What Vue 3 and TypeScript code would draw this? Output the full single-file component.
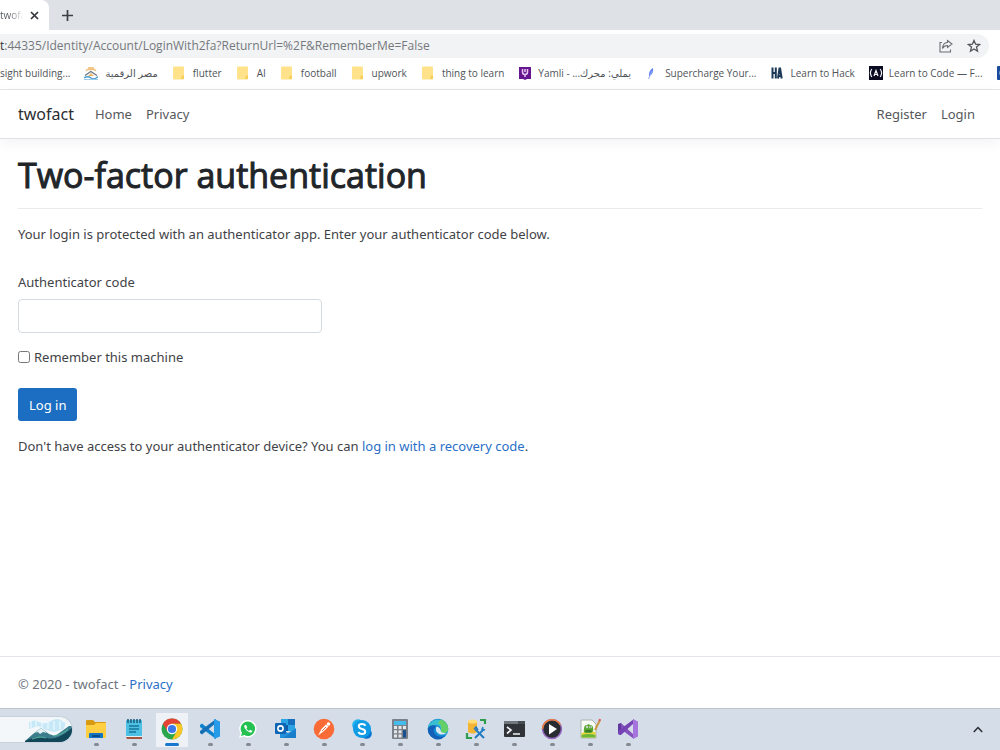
<script setup lang="ts">
import { ref } from 'vue'

interface Bookmark {
  label: string
  icon: string
  rtl?: boolean
  tight?: boolean
}

const bookmarks: Bookmark[] = [
  { label: 'sight building...', icon: 'none' },
  { label: 'مصر الرقمية', icon: 'egypt', rtl: true },
  { label: 'flutter', icon: 'folder' },
  { label: 'AI', icon: 'folder' },
  { label: 'football', icon: 'folder' },
  { label: 'upwork', icon: 'folder' },
  { label: 'thing to learn', icon: 'folder' },
  { label: 'Yamli - ...يملي: محرك', icon: 'yamli', tight: true },
  { label: 'Supercharge Your...', icon: 'feather', tight: true },
  { label: 'Learn to Hack', icon: 'hack', tight: true },
  { label: 'Learn to Code — F...', icon: 'code', tight: true },
  { label: '', icon: 'badge' },
]

const apps: string[] = [
  'File Explorer', 'Notepad', 'Chrome', 'Visual Studio Code', 'WhatsApp', 'Outlook', 'Postman', 'Skype',
  'Calculator', 'Edge', 'Database Tools', 'Terminal', 'Media Player', 'Notepad++', 'Visual Studio',
]

const code = ref('')
const remember = ref(false)
</script>

<template>
  <div class="screen">
    <header class="browser">
      <div class="tabs">
        <div class="tab">
          <span class="tab-title">twofa</span>
          <button class="plain tab-close" aria-label="Close tab">
            <svg width="9" height="9" viewBox="0 0 9 9"><path d="M1 1l7 7M8 1L1 8" stroke="#33363a" stroke-width="1.7" /></svg>
          </button>
        </div>
        <button class="plain tab-new" aria-label="New tab">
          <svg width="11" height="11" viewBox="0 0 11 11"><path d="M5.500 0v11M0 5.500h11" stroke="#3c4043" stroke-width="1.7" /></svg>
        </button>
      </div>
      <div class="address-row">
        <div class="address">
          <span class="url"><b>t</b>:44335/Identity/Account/LoginWith2fa?ReturnUrl=%2F&amp;RememberMe=False</span>
          <button class="plain" aria-label="Share">
            <svg width="14" height="14" viewBox="0 0 14 14" fill="none" stroke="#6b6f73" stroke-width="1.100"><path d="M3 3.500H1V13H11.500V10.500M8.500 1.500L13 5 8.500 8.500V6.500C6 6.500 4.500 7.500 3.500 9.500 3.500 6 5.500 3.800 8.500 3.500Z" /></svg>
          </button>
          <button class="plain" aria-label="Bookmark this page">
            <svg width="14" height="14" viewBox="0 0 14 14" fill="none" stroke="#505357" stroke-width="1.300"><path d="M7 1.500L8.600 5.200 12.600 5.500 9.500 8.100 10.500 12.200 7 10 3.500 12.200 4.500 8.100 1.400 5.500 5.400 5.200Z" /></svg>
          </button>
        </div>
      </div>
      <nav class="bookmarks" aria-label="Bookmarks">
        <a v-for="b in bookmarks" :key="b.label" href="#" class="bookmark" :class="{ tight: b.tight }">
          <svg v-if="b.icon === 'folder'" class="bm-icon" viewBox="0 0 14 14"><rect x="1" y="0.500" width="11" height="13" rx="1" fill="#ffe289" /><path d="M10 9.500h2v3.500h-3z" fill="#f7ce58" /></svg>
          <svg v-else-if="b.icon === 'egypt'" class="bm-icon" viewBox="0 0 14 14"><path d="M4 2h6" stroke="#efb768" stroke-width="1.500" /><path d="M2 5L3.500 3.500h7L12 5" stroke="#f1c27f" stroke-width="1.500" fill="none" /><path d="M1 9.500L6.800 5.500 13 9.500" stroke="#6b7580" stroke-width="1.300" fill="none" /><path d="M4 10l3-3 3 3z" fill="#e9b66f" /><path d="M0 12q3.500-2.500 7 0t7-1.500" stroke="#4d9ed1" stroke-width="1.500" fill="none" /><path d="M0 13.500h14" stroke="#9dcceb" /></svg>
          <svg v-else-if="b.icon === 'yamli'" class="bm-icon" viewBox="0 0 14 14"><path d="M1 1h12v12H9l-2 1-2-1H1z" fill="#65158d" /><path d="M4.500 3v3q0 2.500 2.500 2.500T9.500 6V3M7 3v3M7 8v3" stroke="#e9c9f3" stroke-width="1.500" fill="none" /></svg>
          <svg v-else-if="b.icon === 'feather'" class="bm-icon" viewBox="0 0 14 14"><path d="M4 10Q3.500 4.500 8 2q1 5-3.500 8z" fill="#5c7ef0" /><path d="M3.500 13L7 5" stroke="#95aaf7" /></svg>
          <svg v-else-if="b.icon === 'hack'" class="bm-icon" viewBox="0 0 14 14"><path d="M2.500 1.500v11M5.800 1.500v11M2.500 7h3.500M8 12.500L9.500 2.500h.6L11.700 12.500M9 10h2" stroke="#1b3a57" stroke-width="2" fill="none" /></svg>
          <svg v-else-if="b.icon === 'code'" class="bm-icon" viewBox="0 0 14 14"><path d="M0 0h14v14H0z" fill="#0a0a23" /><path d="M2.800 3Q0 7 2.800 11M11.200 3q2.800 4 0 8M5 10L7 4.500 9 10M6 8.500h2" stroke="#f4f4f7" stroke-width="1.200" fill="none" /></svg>
          <svg v-else-if="b.icon === 'badge'" class="bm-icon" viewBox="0 0 14 14"><rect width="14" height="14" rx="1" fill="#1b4b9c" /><circle cx="7" cy="7" r="4" fill="none" stroke="#9cbbe8" stroke-width="1.500" /></svg>
          <bdi :dir="b.rtl ? 'rtl' : 'ltr'">{{ b.label }}</bdi>
        </a>
      </nav>
    </header>

    <nav class="site-nav">
      <a href="#" class="brand">twofact</a>
      <a href="#">Home</a>
      <a href="#">Privacy</a>
      <a href="#" class="push">Register</a>
      <a href="#">Login</a>
    </nav>

    <main>
      <h1>Two-factor authentication</h1>
      <hr />
      <p class="intro">Your login is protected with an authenticator app. Enter your authenticator code below.</p>
      <form @submit.prevent>
        <label for="code">Authenticator code</label>
        <input id="code" v-model="code" class="code" type="text" autocomplete="off" />
        <div class="check">
          <input id="remember" v-model="remember" type="checkbox" />
          <label for="remember">Remember this machine</label>
        </div>
        <button class="submit" type="submit">Log in</button>
      </form>
      <p class="help">Don't have access to your authenticator device? You can <a href="#">log in with a recovery code</a>.</p>
    </main>

    <footer>© 2020 - twofact - <a href="#">Privacy</a></footer>

    <div class="taskbar">
      <button class="plain search" aria-label="Search">
        <svg width="48" height="26" viewBox="0 0 48 26">
          <path d="M5 6Q10 3 15 6T27 5 38 5 42 4L40 13 30 16 22 14 14 10 5 13Z" fill="#c6e8f7" />
          <path d="M7 5v7M12 4v6M18 5v7M24 4v9M30 5v9M36 5v8" stroke="#e6f6fc" stroke-width="1.500" />
          <path d="M1 25L9 18 17 12 25 18 31 20 45 10H48V26H1Z" fill="#3b7d8c" />
          <path d="M11 17l6-5 6 5-4-1-3 2-2-2z" fill="#e5f2f5" />
          <path d="M1 25q12-6 22-3T48 12v14H1z" fill="#12475a" />
          <path d="M8 23q8-3 14-1M30 20q8-1 14-7" stroke="#4fa596" stroke-width="1.300" fill="none" />
        </svg>
      </button>
      <button v-for="app in apps" :key="app" class="plain app" :class="{ active: app === 'Chrome' }" :aria-label="app">
        <svg width="22" height="22" viewBox="0 0 22 22" fill="none">
          <g v-if="app === 'File Explorer'">
            <path d="M1 3q0-1 1-1h6l2 2h10q1 0 1 1v5H1z" fill="#d99a13" />
            <path d="M1 7h8l2-2h10v15H1z" fill="#ffcf43" />
            <path d="M4 20v-4q0-1 1-1h12q1 0 1 1v4z" fill="#1474c4" /><path d="M7 18h8" stroke="#0b4d8c" stroke-width="2" />
          </g>
          <g v-else-if="app === 'Notepad'">
            <rect x="3" y="2" width="16" height="17" rx="1" fill="#4dc0e3" /><path d="M3 19h16v2H4z" fill="#a3563e" /><path d="M3 18.500h16" stroke="#e5eef2" />
            <path d="M5 1v4M8 1v4M11 1v4M14 1v4M17 1v4" stroke="#17597a" stroke-width="1.500" /><path d="M6 8h10M6 11h10M6 14h7" stroke="#167599" stroke-width="1.500" />
          </g>
          <g v-else-if="app === 'Chrome'">
            <circle cx="11" cy="11" r="10.500" fill="#29a64c" />
            <path d="M11 11L1.900 5.800A10.500 10.500 0 0 1 20.100 5.800H11z" fill="#e54335" />
            <path d="M11 5.800h9.100A10.500 10.500 0 0 1 11 21.500L15.600 13.500z" fill="#fdc827" />
            <path d="M1.900 5.800L6.500 13.600 11 11 11 5.800z" fill="#e54335" />
            <circle cx="11" cy="11" r="5.200" fill="#fff" /><circle cx="11" cy="11" r="4.100" fill="#3b79ea" />
          </g>
          <g v-else-if="app === 'Visual Studio Code'">
            <path d="M1 7l2-1.500L17 17v4L1 9z" fill="#1183ce" /><path d="M1 15l2 1.500L17 5V1L1 13z" fill="#1670b5" /><path d="M15 1l6 2.500v15L15 21z" fill="#269be8" />
          </g>
          <g v-else-if="app === 'WhatsApp'">
            <path d="M11 2a8.700 8.700 0 1 1-4.200 16.400L2 20l1.600-4.700A8.700 8.700 0 0 1 11 2z" fill="#fff" />
            <path d="M11 3.500a7.200 7.200 0 1 1-3.800 13.400L4 18l1-3.200A7.200 7.200 0 0 1 11 3.500z" fill="#25c252" />
            <path d="M8 7q-1.500 1 0 3.500T13 14.500q2 .4 2.500-1.600l-2.400-1.200-1 1.200q-1.700-.6-2.700-2.500l.8-1L9.200 7z" fill="#fff" />
          </g>
          <g v-else-if="app === 'Outlook'">
            <rect x="6" y="1" width="14" height="12" fill="#2aa4e4" /><path d="M13 1h7v6h-7z" fill="#1670bf" /><path d="M6 7h7v6H6z" fill="#105ba5" />
            <path d="M5 10l8 5 8-5v10H5z" fill="#2292dc" /><path d="M8 20l13-9v9z" fill="#1a7fcb" />
            <rect x="0" y="5" width="11" height="11" rx="1" fill="#0f65b5" /><circle cx="5.500" cy="10.500" r="2.600" stroke="#fff" stroke-width="1.600" />
          </g>
          <g v-else-if="app === 'Postman'">
            <circle cx="11" cy="11" r="10.300" fill="#fb6b36" /><path d="M5 17.500L8.500 11 13 6.500 15.500 8.500 11 13z" fill="#fff" /><circle cx="15.500" cy="6" r="1.800" fill="#fff" /><path d="M9 13l4-4" stroke="#d85025" stroke-width=".8" />
          </g>
          <g v-else-if="app === 'Skype'">
            <circle cx="7" cy="7" r="5.800" fill="#20b3ef" /><circle cx="15.500" cy="15.500" r="5.300" fill="#0875d1" /><circle cx="11" cy="11" r="9" fill="#109be5" />
            <path d="M14.500 7.800Q13.500 6 11 6 7.800 6 7.800 8.300q0 2 3.200 2.700t3.200 2.700Q14.200 16 11 16q-2.700 0-3.700-2" stroke="#fff" stroke-width="2" />
          </g>
          <g v-else-if="app === 'Calculator'">
            <rect x="3" y="1" width="16" height="20" rx="1" fill="#7b8188" /><path d="M5 3h12v4H5z" fill="#43bced" />
            <path d="M5 8h3v3H5zM9.500 8h3v3h-3zM14 8h3v3h-3zM5 12.200h3v3H5zM9.500 12.200h3v3h-3zM5 16.500h3v3H5zM9.500 16.500h3v3h-3z" fill="#e5e7e9" /><path d="M14 12.200h3v7.300h-3z" fill="#174f91" />
          </g>
          <g v-else-if="app === 'Edge'">
            <circle cx="11" cy="11" r="10.300" fill="#128cd2" />
            <path d="M1 9A10.300 10.300 0 0 1 21.200 12Q20 16 15 15q-3-.5-1.500-3Q14 7 8.500 7 3 7 1 9z" fill="#39bfd0" />
            <path d="M14 1.200Q21 4 21.300 11q-.5 4.500-5.300 4-3-.6-2-3 1-5-3-7z" fill="#64cf69" />
            <path d="M1 10Q5 6 9 8q-4 4-1 8 3 4 10 2-6 6-12 2T1 10z" fill="#1260b8" />
            <path d="M13.500 12q-.5-3-4-3.500-2 5 2.500 7.500 4 1.500 7.500-.8-6 0-6-3.200z" fill="#dbe8f2" />
          </g>
          <g v-else-if="app === 'Database Tools'">
            <path d="M3 3v11q5 3 9 0V3z" fill="#f4b535" /><ellipse cx="7.500" cy="3.500" rx="4.500" ry="2" fill="#ffdd77" />
            <path d="M15 2h5v4M2 15v5h5" stroke="#2f9d4d" stroke-width="2.200" /><path d="M10 11l9 9M19 11l-9 9" stroke="#237bc2" stroke-width="2" /><path d="M9 11l2-2 2 3M20 12l-3-1 1-2" stroke="#237bc2" stroke-width="1.500" />
          </g>
          <g v-else-if="app === 'Terminal'">
            <rect x="1" y="3" width="21" height="16" rx="1" fill="#303438" /><path d="M1 3h14v3H1z" fill="#72777c" /><path d="M15 3h7v3h-7z" fill="#484d52" /><path d="M4 9l4 3-4 3.500M10 16h7" stroke="#f1f3f4" stroke-width="1.700" />
          </g>
          <g v-else-if="app === 'Media Player'">
            <circle cx="11" cy="11" r="9.500" fill="#282b31" stroke="#9a6bc4" stroke-width="1.500" /><path d="M1.500 11A9.500 9.500 0 0 1 19.500 7" stroke="#ee803c" stroke-width="1.500" /><path d="M8 6l8 5-8 5.500z" fill="#fff" />
          </g>
          <g v-else-if="app === 'Notepad++'">
            <path d="M2 2h11l4 4v14H2z" fill="#f8faf5" stroke="#a9b2ac" /><path d="M2.500 15q6-3 14-1v5.500h-14z" fill="#e6d63c" /><path d="M2.500 17q7-2 14 0v2.500h-14z" fill="#6cb63a" />
            <path d="M5 11q0-4 3-4 1.500-1.500 3 0 3 0 3 3 1 4-2 5H6.500Q4 14 5 11z" fill="#55a52f" /><circle cx="8" cy="9" r="1.200" fill="#fff" /><circle cx="11.500" cy="9" r="1.200" fill="#fff" /><path d="M6.500 13h6M7.500 9h1M11 9h1" stroke="#224c25" />
            <path d="M16 12L21 2" stroke="#c99741" stroke-width="2" /><path d="M20.400 3L21 1" stroke="#e2595e" stroke-width="2" />
          </g>
          <g v-else>
            <path d="M1 7l3-2L17 17v4L1 9z" fill="#8452bb" /><path d="M1 6v10l3 1V5z" fill="#62369f" /><path d="M1 16l3 1L17 5V1L1 13z" fill="#7543b4" /><path d="M16 1l5 2.500v15L16 21z" fill="#a575dd" />
          </g>
        </svg>
        <span class="running"></span>
      </button>
      <button class="plain tray" aria-label="Show hidden icons">
        <svg width="10" height="7" viewBox="0 0 10 7"><path d="M.8 6L5 1.500 9.200 6" fill="none" stroke="#26292d" stroke-width="1.400" /></svg>
      </button>
    </div>
  </div>
</template>

<style>
body { margin: 0; }
</style>

<style scoped>
.screen {
  min-height: 100vh;
  display: flex;
  flex-direction: column;
  overflow: hidden;
  background: #fff;
  color: #3f4347;
  font-family: "Noto Sans", "Open Sans", "DejaVu Sans", sans-serif;
  font-size: 13px;
  line-height: 20px;
}
*, *::before, *::after { box-sizing: border-box; }
a { color: #2a70c8; text-decoration: none; }
svg { display: block; flex: none; }
button, input { font: inherit; }
.plain { display: flex; align-items: center; justify-content: center; border: 0; padding: 0; background: none; }

.browser { border-bottom: 1px solid #e4e6e8; font-family: "Open Sans", "Noto Sans", "DejaVu Sans", sans-serif; }
.tabs { display: flex; height: 30px; background: #dee1e6; }
.tab { display: flex; align-items: center; width: 49px; background: #fff; border-radius: 0 8px 0 0; }
.tab-title {
  width: 30px;
  overflow: hidden;
  font-size: 10px;
  background: linear-gradient(90deg, #55595e 30%, transparent 80%);
  background-clip: text;
  color: transparent;
}
.tab-new { margin-left: 13px; }
.address-row { padding: 4px 11px 4px 0; }
.address {
  display: flex;
  align-items: center;
  gap: 14px;
  height: 24px;
  padding-right: 8px;
  border-radius: 0 12px 12px 0;
  background: #f1f3f4;
}
.url { flex: 1; font-size: 12px; color: #75797d; white-space: nowrap; }
.url b { font-weight: 400; color: #303336; }
.bookmarks { display: flex; align-items: center; gap: 14px; height: 27px; padding-bottom: 5px; white-space: nowrap; }
.bookmark { display: flex; flex: none; align-items: center; gap: 7px; font-size: 10px; line-height: 16px; color: #505458; }
.bookmark.tight { gap: 6px; }
.bm-icon { width: 14px; height: 14px; }

.site-nav {
  display: flex;
  align-items: center;
  gap: 14px;
  height: 49px;
  padding: 0 25px 0 18px;
  border-bottom: 1px solid #dee2e6;
  box-shadow: 0 4px 12px rgba(0, 0, 0, 0.05);
}
.site-nav a { color: #55585b; }
.site-nav .brand { margin-right: 7px; font-size: 16px; color: #2b2e31; }
.site-nav .push { margin-left: auto; }

main { flex: 1; padding: 14px 18px 0; }
h1 {
  margin: 0;
  font-family: "Open Sans", "Noto Sans", sans-serif;
  font-size: 34px;
  line-height: 44px;
  font-weight: 400;
  color: #212529;
  -webkit-text-stroke: 1px #212529;
}
hr { margin: 11px 0 15px; border: 0; border-top: 1px solid #e9eaeb; }
p { margin: 0; }
.intro { margin-bottom: 28px; }
form > label { display: block; margin-bottom: 7px; }
.code {
  display: block;
  width: 304px;
  max-width: 100%;
  height: 34px;
  padding: 4px 10px;
  border: 1px solid #d5dbe0;
  border-radius: 4px;
  background: #fff;
}
.check { display: flex; align-items: center; gap: 4px; margin: 14px 0 21px; }
.check input { width: 12px; height: 12px; margin: 0; }
.submit {
  display: block;
  height: 33px;
  padding: 0 11px;
  border: 0;
  border-radius: 3px;
  background: #1b6ec2;
  color: #fff;
}
.help { margin-top: 15px; }

footer { height: 52px; padding: 17px 18px; border-top: 1px solid #e2e5e9; color: #6f757b; }

.taskbar {
  display: flex;
  align-items: stretch;
  height: 42px;
  border-top: 1px solid #bfc4ca;
  background: #d4dde8;
}
.search {
  align-self: center;
  justify-content: flex-end;
  width: 73px;
  height: 27px;
  margin: 0 4px 1px 0;
  overflow: hidden;
  border: 1px solid #c6d1dc;
  border-left: 0;
  border-radius: 0 14px 14px 0;
  background: #f4f7fa;
}
.app { flex-direction: column; width: 38px; gap: 3px; padding-top: 5px; }
.app.active { background: linear-gradient(#eef2f7, #eef2f7) center / 32px 34px no-repeat; }
.running { width: 5px; height: 3px; border-radius: 2px; background: #858a91; }
.active .running { width: 14px; background: #1679cf; }
.tray { margin: 0 17px 0 auto; }
</style>
